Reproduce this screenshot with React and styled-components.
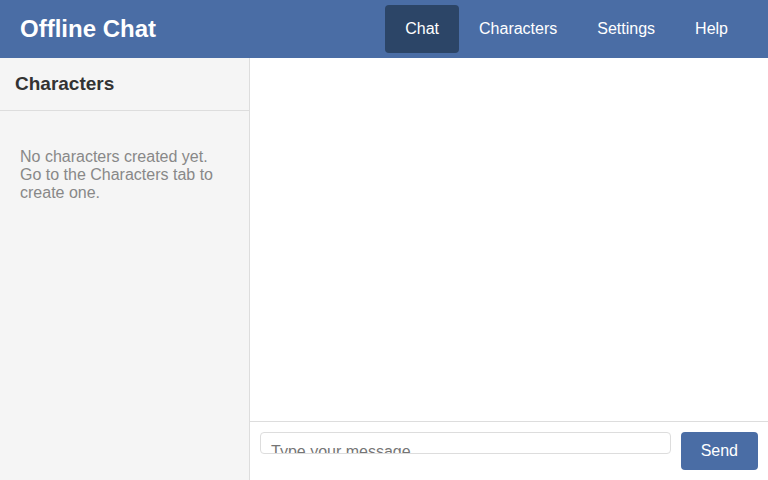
import React, { useState } from 'react'
import styled, { createGlobalStyle } from 'styled-components'

const GlobalStyle = createGlobalStyle`
	html, body, #root {
		margin: 0;
		height: 100%;
	}
	body {
		font-family: 'Liberation Sans', Arial, sans-serif;
		color: #333;
	}
	* {
		box-sizing: border-box;
	}
`

const tabs = ['Chat', 'Characters', 'Settings', 'Help']

function App() {
	const [active, setActive] = useState('Chat')
	const [message, setMessage] = useState('')

	return (
		<>
			<GlobalStyle />
			<Page>
				<Header>
					<Title>Offline Chat</Title>
					<Nav>
						{tabs.map((tab) => (
							<NavButton
								key={tab}
								$active={tab === active}
								onClick={() => setActive(tab)}>
								{tab}
							</NavButton>
						))}
					</Nav>
				</Header>
				<Main>
					<Sidebar>
						<SidebarHeader>Characters</SidebarHeader>
						<CharacterList>
							<EmptyText>
								No characters created yet. Go to the Characters tab to create
								one.
							</EmptyText>
						</CharacterList>
					</Sidebar>
					<ChatArea>
						<Messages />
						<InputRow>
							<MessageInput
								value={message}
								placeholder='Type your message...'
								onChange={(e) => setMessage(e.target.value)}
							/>
							<SendButton>Send</SendButton>
						</InputRow>
					</ChatArea>
				</Main>
			</Page>
		</>
	)
}

export default App

const Page = styled.div`
	display: flex;
	flex-direction: column;
	height: 100%;
`
const Header = styled.header`
	height: 58px;
	flex-shrink: 0;
	background-color: #4a6da5;
	color: #fff;
	display: flex;
	align-items: center;
	justify-content: space-between;
	padding: 0 20px;
`
const Title = styled.h1`
	margin: 0;
	font-size: 24px;
	font-weight: bold;
`
const Nav = styled.nav`
	display: flex;
	align-self: flex-start;
	margin-top: 5px;
`
const NavButton = styled.button`
	border: none;
	background-color: ${(p) => (p.$active ? '#2c4567' : 'transparent')};
	color: #fff;
	font-family: inherit;
	font-size: 16px;
	line-height: 18px;
	padding: 15px 20px;
	border-radius: 4px;
	cursor: pointer;
`
const Main = styled.div`
	flex: 1;
	display: flex;
	min-height: 0;
`
const Sidebar = styled.aside`
	width: 250px;
	flex-shrink: 0;
	background-color: #f5f5f5;
	border-right: 1px solid #ddd;
	display: flex;
	flex-direction: column;
`
const SidebarHeader = styled.h2`
	margin: 0;
	padding: 15px;
	font-size: 19px;
	line-height: 22px;
	font-weight: bold;
	color: #333;
	border-bottom: 1px solid #ddd;
`
const CharacterList = styled.div`
	padding: 15px;
`
const EmptyText = styled.p`
	margin: 0;
	padding: 22px 5px;
	color: #888;
	font-size: 16px;
	line-height: 18px;
`
const ChatArea = styled.section`
	flex: 1;
	display: flex;
	flex-direction: column;
	background-color: #fff;
`
const Messages = styled.div`
	flex: 1;
`
const InputRow = styled.div`
	display: flex;
	align-items: flex-start;
	gap: 10px;
	padding: 10px;
	border-top: 1px solid #ddd;
`
const MessageInput = styled.textarea`
	flex: 1;
	height: 22px;
	padding: 10px;
	border: 1px solid #ddd;
	border-radius: 4px;
	resize: none;
	overflow: hidden;
	font-family: inherit;
	font-size: 16px;
	line-height: 18px;
	&::placeholder {
		color: #757575;
	}
`
const SendButton = styled.button`
	border: none;
	border-radius: 4px;
	background-color: #4a6da5;
	color: #fff;
	font-family: inherit;
	font-size: 16px;
	line-height: 18px;
	padding: 10px 20px;
	cursor: pointer;
`
